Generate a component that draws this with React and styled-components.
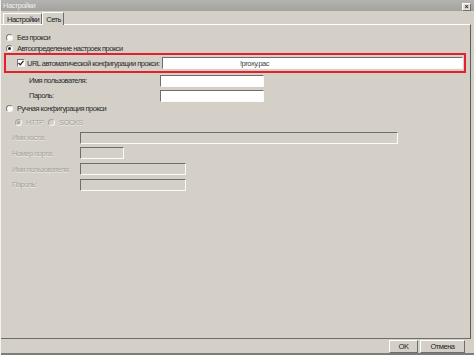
import React from 'react'
import styled, { createGlobalStyle, css } from 'styled-components'

const GlobalStyle = createGlobalStyle`
    html, body {
        margin: 0;
        padding: 0;
        background: #d4d0c8;
    }
    body {
        font-family: "Liberation Sans", Arial, sans-serif;
        font-size: 7.5px;
        letter-spacing: -0.5px;
        color: #2a2a2a;
    }
`

const Window = styled.div`
    width: 474px;
    height: 355px;
    display: flex;
    flex-direction: column;
    background: #d4d0c8;
    border-left: 1px solid #f4f2ee;
    box-sizing: border-box;
    overflow: hidden;
`

const TitleBar = styled.div`
    height: 11px;
    flex: none;
    display: flex;
    align-items: center;
    justify-content: space-between;
    padding: 0 3px 0 2px;
    background: linear-gradient(#b4b3af, #a3a29e);
    color: #ececec;
`

const CloseButton = styled.div`
    width: 9px;
    height: 8px;
    margin-top: 2px;
    display: flex;
    align-items: center;
    justify-content: center;
    background: #e4e2dc;
    border: 1px solid;
    border-color: #ffffff #6e6d69 #6e6d69 #ffffff;
    box-sizing: border-box;
    color: #222;
    font-size: 7px;
    font-weight: bold;
    line-height: 1;
    letter-spacing: 0;
`

const TabStrip = styled.div`
    height: 12px;
    flex: none;
    display: flex;
    align-items: flex-end;
    padding-left: 2px;
    margin-top: 1px;
`

const Tab = styled.div`
    height: 11px;
    padding: 0 2px 0 3px;
    display: flex;
    align-items: center;
    border: 1px solid;
    border-bottom: none;
    border-color: #ffffff #6e6d69 transparent #ffffff;
    box-sizing: border-box;
    color: #222;
    ${({ $active }) => $active && css`
        height: 13px;
        margin-bottom: -1px;
        background: #d4d0c8;
        position: relative;
        z-index: 1;
    `}
`

const Body = styled.div`
    flex: 1;
    display: flex;
    flex-direction: column;
    border-top: 1px solid #ffffff;
    border-right: 1px solid #5e5d5a;
    border-bottom: 1px solid #6e6d69;
    margin-right: 3px;
    padding-top: 6px;
    box-sizing: border-box;
`

const Row = styled.div`
    height: ${({ $h }) => $h || 12}px;
    display: flex;
    align-items: center;
    padding-left: ${({ $indent }) => $indent || 0}px;
    flex: none;
`

const Radio = styled.span`
    width: 7px;
    height: 7px;
    border-radius: 50%;
    background: #ffffff;
    border: 1px solid;
    border-color: #7a7874 #f6f5f2 #f6f5f2 #7a7874;
    box-sizing: border-box;
    margin-right: 4px;
    display: inline-flex;
    align-items: center;
    justify-content: center;
    flex: none;
    ${({ $disabled }) => $disabled && css`
        background: #d4d0c8;
        border-color: #aaa7a0 #f6f5f2 #f6f5f2 #aaa7a0;
    `}
    &::after {
        content: '';
        width: 3px;
        height: 3px;
        border-radius: 50%;
        background: ${({ $disabled }) => ($disabled ? '#a8a49c' : '#222')};
        display: ${({ $checked }) => ($checked ? 'block' : 'none')};
    }
`

const Highlight = styled.div`
    margin: 0 4px 0 3px;
    height: 20px;
    flex: none;
    border: 2px solid #e4202c;
    box-sizing: border-box;
    display: flex;
    align-items: center;
    padding-left: 11px;
    padding-right: 1px;
`

const CheckBox = styled.span`
    width: 8px;
    height: 8px;
    background: #ffffff;
    border: 1px solid;
    border-color: #7a7874 #f6f5f2 #f6f5f2 #7a7874;
    box-sizing: border-box;
    margin-right: 2px;
    display: inline-flex;
    align-items: center;
    justify-content: center;
    flex: none;
`

const Label = styled.span`
    width: ${({ $w }) => $w}px;
    flex: none;
    white-space: nowrap;
    overflow: hidden;
    color: ${({ $disabled }) => ($disabled ? '#a7a39c' : '#2a2a2a')};
    text-shadow: ${({ $disabled }) => ($disabled ? '0 1px 0 #ecebe6' : 'none')};
`

const Input = styled.div`
    width: ${({ $w }) => ($w ? `${$w}px` : 'auto')};
    flex: ${({ $w }) => ($w ? 'none' : '1')};
    height: 12px;
    box-sizing: border-box;
    border: 1px solid;
    border-color: #6e6d69 #fbfaf8 #fbfaf8 #6e6d69;
    background: ${({ $disabled }) => ($disabled ? '#d4d0c8' : '#ffffff')};
    display: flex;
    align-items: center;
    color: #444;
`

const InputText = styled.span`
    padding-left: 77px;
`

const Spacer = styled.div`
    flex: 1;
`

const ButtonBar = styled.div`
    height: 16px;
    flex: none;
    display: flex;
    justify-content: flex-end;
    align-items: flex-start;
    padding-top: 1px;
    padding-right: 9px;
    gap: 2px;
    border-bottom: 2px solid #7d7c78;
    box-sizing: border-box;
`

const Button = styled.div`
    width: ${({ $w }) => $w}px;
    height: 13px;
    display: flex;
    align-items: center;
    justify-content: center;
    border: 1px solid;
    border-color: #ffffff #6e6d69 #6e6d69 #ffffff;
    box-sizing: border-box;
    color: #222;
`

const Check = () => (
    <svg width="6" height="6" viewBox="0 0 6 6">
        <path d="M0.5 3 L2.3 4.8 L5.5 0.8" fill="none" stroke="#222" strokeWidth="1.3" />
    </svg>
)

const App = () => {
    return (
        <Window>
            <GlobalStyle />
            <TitleBar>
                <span>Настройки</span>
                <CloseButton>×</CloseButton>
            </TitleBar>
            <TabStrip>
                <Tab>Настройки</Tab>
                <Tab $active>Сеть</Tab>
            </TabStrip>
            <Body>
                <Row $indent={5}>
                    <Radio />
                    Без прокси
                </Row>
                <Row $indent={5} $h={10}>
                    <Radio $checked />
                    Автоопределение настроек прокси
                </Row>
                <Highlight>
                    <CheckBox><Check /></CheckBox>
                    <Label $w={135}>URL автоматической конфигурации прокси:</Label>
                    <Input>
                        <InputText>!proxy.pac</InputText>
                    </Input>
                </Highlight>
                <Row $indent={28} $h={15}>
                    <Label $w={131}>Имя пользователя:</Label>
                    <Input $w={104} />
                </Row>
                <Row $indent={28} $h={15}>
                    <Label $w={131}>Пароль:</Label>
                    <Input $w={104} />
                </Row>
                <Row $indent={5} $h={11}>
                    <Radio />
                    Ручная конфигурация прокси
                </Row>
                <Row $indent={14} $h={16}>
                    <Radio $checked $disabled />
                    <Label $disabled $w={22}>HTTP</Label>
                    <Radio $disabled />
                    <Label $disabled $w={30}>SOCKS</Label>
                </Row>
                <Row $indent={11} $h={15}>
                    <Label $disabled $w={68}>Имя хоста:</Label>
                    <Input $disabled $w={318} />
                </Row>
                <Row $indent={11} $h={16}>
                    <Label $disabled $w={68}>Номер порта:</Label>
                    <Input $disabled $w={44} />
                </Row>
                <Row $indent={11} $h={16}>
                    <Label $disabled $w={68}>Имя пользователя:</Label>
                    <Input $disabled $w={106} />
                </Row>
                <Row $indent={11} $h={15}>
                    <Label $disabled $w={68}>Пароль:</Label>
                    <Input $disabled $w={106} />
                </Row>
                <Spacer />
            </Body>
            <ButtonBar>
                <Button $w={29}>OK</Button>
                <Button $w={45}>Отмена</Button>
            </ButtonBar>
        </Window>
    )
}

export default App
